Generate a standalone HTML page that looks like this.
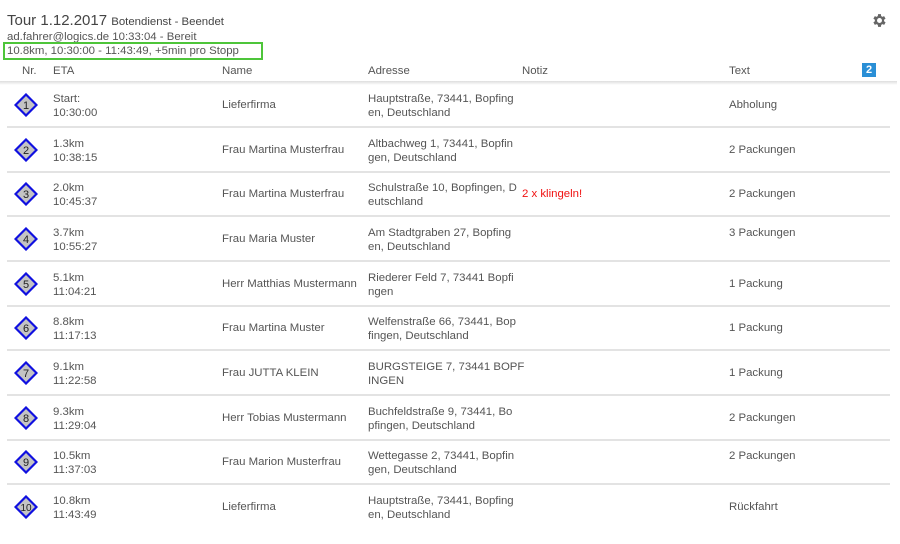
<!DOCTYPE html>
<html><head><meta charset="utf-8"><style>
*{margin:0;padding:0;box-sizing:border-box}
body{width:900px;height:544px;overflow:hidden;background:#fff;font-family:"Liberation Sans",sans-serif;color:#555;position:relative}
.a{position:absolute;white-space:nowrap}
.t{font-size:11.4px;line-height:14px;color:#555}
.sep{position:absolute;left:7px;width:883px;height:2px;background:#e3e3e3}
.dia{position:absolute;left:14px;width:24px;height:24px}
</style></head><body>
<div class="a" style="left:7px;top:12px;font-size:15px;color:#444">Tour 1.12.2017 <span style="font-size:11.4px">Botendienst - Beendet</span></div>
<div class="a t" style="left:7px;top:30px">ad.fahrer@logics.de 10:33:04 - Bereit</div>
<div class="a" style="left:3px;top:42px;width:260px;height:18px;border:2px solid #4ec53a"></div>
<div class="a t" style="left:7px;top:44px">10.8km, 10:30:00 - 11:43:49, +5min pro Stopp</div>
<svg class="a" style="left:871px;top:12px" width="17" height="17" viewBox="0 0 24 24"><path fill="#666" d="M19.4 13a7.5 7.5 0 0 0 0-2l2.1-1.6-2-3.5-2.5 1a7 7 0 0 0-1.7-1L15 3h-4l-.4 2.9a7 7 0 0 0-1.7 1l-2.5-1-2 3.5L6.5 11a7.5 7.5 0 0 0 0 2l-2.1 1.6 2 3.5 2.5-1a7 7 0 0 0 1.7 1L11 21h4l.4-2.9a7 7 0 0 0 1.7-1l2.5 1 2-3.5zM13 15.5A3.5 3.5 0 1 1 13 8.5a3.5 3.5 0 0 1 0 7z" transform="translate(-1 0)"/></svg>
<div class="a" style="left:0;top:81px;width:897px;height:4px;background:linear-gradient(#ddd,#fff)"></div>
<div class="a t" style="left:22px;top:64px">Nr.</div>
<div class="a t" style="left:53px;top:64px">ETA</div>
<div class="a t" style="left:222px;top:64px">Name</div>
<div class="a t" style="left:368px;top:64px">Adresse</div>
<div class="a t" style="left:522px;top:64px">Notiz</div>
<div class="a t" style="left:729px;top:64px">Text</div>
<div class="a" style="left:862px;top:63px;width:14px;height:14px;background:#2a8fd6;color:#fff;font-size:11px;font-weight:bold;line-height:14px;text-align:center">2</div>
<div id="rows"></div>
<script>
var d=[["Start:","10:30:00","Lieferfirma","Hauptstraße, 73441, Bopfing","en, Deutschland","","Abholung"],
["1.3km","10:38:15","Frau Martina Musterfrau","Altbachweg 1, 73441, Bopfin","gen, Deutschland","","2 Packungen"],
["2.0km","10:45:37","Frau Martina Musterfrau","Schulstraße 10, Bopfingen, D","eutschland","2 x klingeln!","2 Packungen"],
["3.7km","10:55:27","Frau Maria Muster","Am Stadtgraben 27, Bopfing","en, Deutschland","","3 Packungen",1],
["5.1km","11:04:21","Herr Matthias Mustermann","Riederer Feld 7, 73441 Bopfi","ngen","","1 Packung"],
["8.8km","11:17:13","Frau Martina Muster","Welfenstraße 66, 73441, Bop","fingen, Deutschland","","1 Packung"],
["9.1km","11:22:58","Frau JUTTA KLEIN","BURGSTEIGE 7, 73441 BOPF","INGEN","","1 Packung"],
["9.3km","11:29:04","Herr Tobias Mustermann","Buchfeldstraße 9, 73441, Bo","pfingen, Deutschland","","2 Packungen"],
["10.5km","11:37:03","Frau Marion Musterfrau","Wettegasse 2, 73441, Bopfin","gen, Deutschland","","2 Packungen",1],
["10.8km","11:43:49","Lieferfirma","Hauptstraße, 73441, Bopfing","en, Deutschland","","Rückfahrt"]];
var h="";
d.forEach(function(r,i){var c=Math.round(105+i*44.65);
h+='<svg class="dia" style="top:'+(c-12)+'px" viewBox="0 0 24 24"><polygon points="12,1.5 22.5,12 12,22.5 1.5,12" fill="#c4c4c4" stroke="#1010e0" stroke-width="2.2"/><text x="12" y="16" font-size="'+(i==9?10:11)+'" text-anchor="middle" fill="#222" font-family="Liberation Sans">'+(i+1)+'</text></svg>';
h+='<div class="a t" style="left:53px;top:'+(c-13)+'px">'+r[0]+'<br>'+r[1]+'</div>';
h+='<div class="a t" style="left:222px;top:'+(c-7)+'px">'+r[2]+'</div>';
h+='<div class="a t" style="left:368px;top:'+(c-13)+'px">'+r[3]+'<br>'+r[4]+'</div>';
if(r[5])h+='<div class="a t" style="left:522px;top:'+(c-7)+'px;color:#f01010">'+r[5]+'</div>';
h+='<div class="a t" style="left:729px;top:'+(c-7-(r[7]?6:0))+'px">'+r[6]+'</div>';
if(i<9)h+='<div class="sep" style="top:'+(c+21)+'px"></div>';});
document.getElementById("rows").innerHTML=h;
</script>
</body></html>
